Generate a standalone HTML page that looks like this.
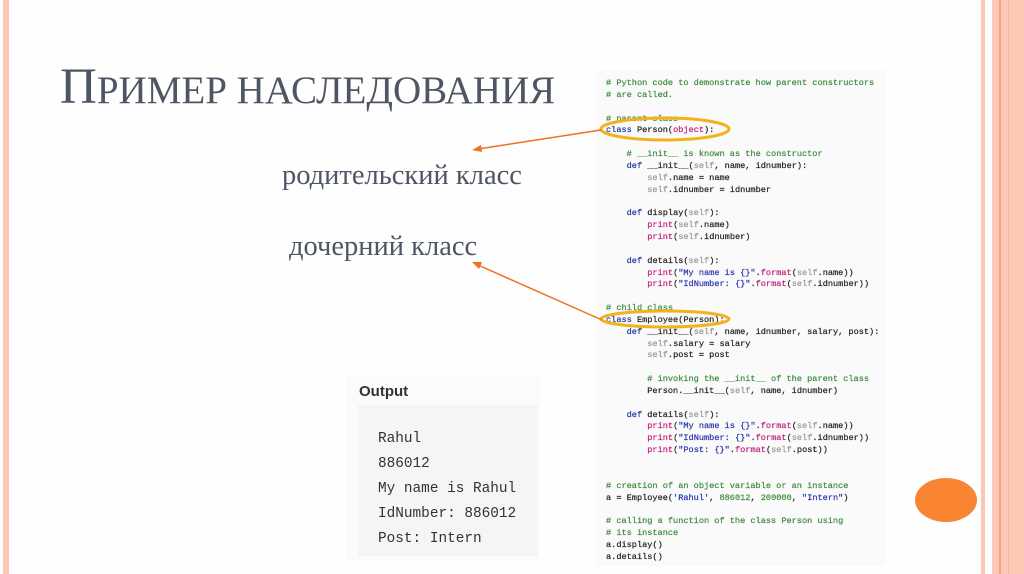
<!DOCTYPE html>
<html><head><meta charset="utf-8"><style>
html,body{margin:0;padding:0}
body{width:1024px;height:574px;position:relative;overflow:hidden;background:#fefefe;font-family:"Liberation Serif",serif}
.s{position:absolute;top:0;height:574px}
#title{position:absolute;left:60px;top:62px;color:#4f5663;white-space:nowrap;font-size:39px;line-height:50px}
#title .b{font-size:51px}
.sub{position:absolute;color:#4f5663;font-size:28.5px;white-space:nowrap}
#code{position:absolute;left:596px;top:70px;width:289px;height:496px;background:#fafafa}
#code pre{margin:0;position:absolute;left:10px;top:8px;font-family:"Liberation Mono",monospace;font-size:8.6px;line-height:11.85px;color:#222;-webkit-text-stroke:0.2px}
.c{color:#3d8b3d}.k{color:#1c3a9e}.p{color:#c2207f}.f{color:#999}.st{color:#2633b0}.n{color:#3d8b3d}
#outbox{position:absolute;left:346px;top:375px;width:194px;height:185px;background:#fbfbfb}
#outt{position:absolute;left:359px;top:383px;font-family:"Liberation Sans",sans-serif;font-weight:bold;font-size:15px;color:#333}
#outin{position:absolute;left:358px;top:405px;width:180px;height:151px;background:#f5f5f5}
#outin pre{margin:0;position:absolute;left:20px;top:22px;font-family:"Liberation Mono",monospace;font-size:14.4px;line-height:25px;color:#333}
</style></head><body>
<div class="s" style="left:3px;width:6px;background:#fcc7b4"></div>
<div class="s" style="left:981px;width:4px;background:#fcc7b4"></div>
<div class="s" style="left:992px;width:32px;background:#fdc8b5"></div>
<div class="s" style="left:999px;width:2px;background:#f8a583"></div>
<div class="s" style="left:1008px;width:1px;background:#fbb89f"></div>

<div id="title"><span class="b">П</span>РИМЕР НАСЛЕДОВАНИЯ</div>
<div class="sub" style="left:282px;top:160px">родительский класс</div>
<div class="sub" style="left:289px;top:231px">дочерний класс</div>

<div id="code"><pre><span class="c"># Python code to demonstrate how parent constructors
# are called.</span>

<span class="c"># parent class</span>
<span class="k">class</span> Person(<span class="p">object</span>):

    <span class="c"># __init__ is known as the constructor</span>
    <span class="k">def</span> __init__(<span class="f">self</span>, name, idnumber):
        <span class="f">self</span>.name = name
        <span class="f">self</span>.idnumber = idnumber

    <span class="k">def</span> display(<span class="f">self</span>):
        <span class="p">print</span>(<span class="f">self</span>.name)
        <span class="p">print</span>(<span class="f">self</span>.idnumber)

    <span class="k">def</span> details(<span class="f">self</span>):
        <span class="p">print</span>(<span class="st">"My name is {}"</span>.<span class="p">format</span>(<span class="f">self</span>.name))
        <span class="p">print</span>(<span class="st">"IdNumber: {}"</span>.<span class="p">format</span>(<span class="f">self</span>.idnumber))

<span class="c"># child class</span>
<span class="k">class</span> Employee(Person):
    <span class="k">def</span> __init__(<span class="f">self</span>, name, idnumber, salary, post):
        <span class="f">self</span>.salary = salary
        <span class="f">self</span>.post = post

        <span class="c"># invoking the __init__ of the parent class</span>
        Person.__init__(<span class="f">self</span>, name, idnumber)

    <span class="k">def</span> details(<span class="f">self</span>):
        <span class="p">print</span>(<span class="st">"My name is {}"</span>.<span class="p">format</span>(<span class="f">self</span>.name))
        <span class="p">print</span>(<span class="st">"IdNumber: {}"</span>.<span class="p">format</span>(<span class="f">self</span>.idnumber))
        <span class="p">print</span>(<span class="st">"Post: {}"</span>.<span class="p">format</span>(<span class="f">self</span>.post))


<span class="c"># creation of an object variable or an instance</span>
a = Employee(<span class="st">'Rahul'</span>, <span class="n">886012</span>, <span class="n">200000</span>, <span class="st">"Intern"</span>)

<span class="c"># calling a function of the class Person using
# its instance</span>
a.display()
a.details()</pre></div>

<div id="outbox"></div>
<div id="outt">Output</div>
<div id="outin"><pre>Rahul
886012
My name is Rahul
IdNumber: 886012
Post: Intern</pre></div>

<svg width="1024" height="574" style="position:absolute;left:0;top:0">
<ellipse cx="665" cy="129" rx="64" ry="11" fill="none" stroke="#f2b21c" stroke-width="3"/>
<ellipse cx="665" cy="319" rx="64" ry="8" fill="none" stroke="#f2b21c" stroke-width="3"/>
<line x1="601" y1="130" x2="478" y2="149" stroke="#f07020" stroke-width="1.5"/>
<polygon points="472,150 481,145 482,152" fill="#f07020"/>
<line x1="602" y1="320" x2="478" y2="265" stroke="#f07020" stroke-width="1.5"/>
<polygon points="472,262 482,262 479,269" fill="#f07020"/>
<ellipse cx="946" cy="500" rx="31" ry="22" fill="#f98431"/>
</svg>
</body></html>
